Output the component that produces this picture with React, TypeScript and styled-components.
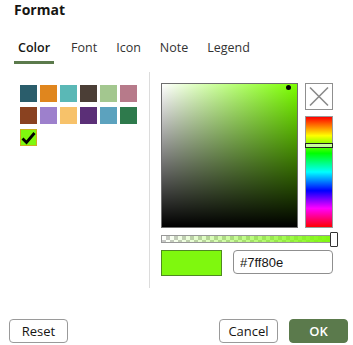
import React from 'react'
import styled, { createGlobalStyle } from 'styled-components'

const GlobalStyle = createGlobalStyle`
	body {
		margin: 0;
		background: #fff;
		font-family: 'Open Sans', 'Noto Sans', sans-serif;
		color: #161513;
	}
`

const SWATCHES = [
	'#2a5d6b', '#e0861e', '#5ab8b6', '#4b3e36', '#a3c78f', '#b77a8a',
	'#8a4220', '#9d80cc', '#f7c26a', '#5b2f77', '#5ca2be', '#2e7a4c',
]

const TABS = ['Color', 'Font', 'Icon', 'Note', 'Legend']

export default function App() {
	return (
		<Dialog>
			<GlobalStyle />
			<Title>Format</Title>
			<TabBar>
				{TABS.map((t, i) => (
					<Tab key={t} active={i === 0}>
						{t}
					</Tab>
				))}
			</TabBar>
			<Body>
				<SwatchPanel>
					<SwatchGrid>
						{SWATCHES.map((c) => (
							<Swatch key={c} color={c} />
						))}
						<Swatch color="#7ff80e" selected>
							<svg width="15" height="14" viewBox="0 0 15 14">
								<path d="M1.5 7.5 L5.5 11.5 L13.5 2" fill="none" stroke="#000" strokeWidth="2.8" />
							</svg>
						</Swatch>
					</SwatchGrid>
				</SwatchPanel>
				<Divider />
				<Picker>
					<PickerTop>
						<SatBox>
							<SatMarker />
						</SatBox>
						<SideCol>
							<ClearBtn>
								<svg width="26" height="25" viewBox="0 0 26 25">
									<path d="M4 3.5 L22 21.5 M22 3.5 L4 21.5" stroke="#8a8a8a" strokeWidth="1.6" />
								</svg>
							</ClearBtn>
							<HueBar>
								<HueMarker />
							</HueBar>
						</SideCol>
					</PickerTop>
					<AlphaBar>
						<AlphaHandle />
					</AlphaBar>
					<PickerBottom>
						<Preview />
						<HexInput defaultValue="#7ff80e" />
					</PickerBottom>
				</Picker>
			</Body>
			<Footer>
				<Button>Reset</Button>
				<Spacer />
				<Button>Cancel</Button>
				<Button primary>OK</Button>
			</Footer>
		</Dialog>
	)
}

const Dialog = styled.div`
	width: 353px;
	height: 345px;
	display: flex;
	flex-direction: column;
	box-sizing: border-box;
`

const Title = styled.div`
	font-weight: 700;
	font-size: 14px;
	line-height: 18px;
	padding: 1px 0 0 14px;
`

const TabBar = styled.div`
	display: flex;
	padding: 20px 0 0 14px;
`

const Tab = styled.div<{ active?: boolean }>`
	font-size: 12.5px;
	line-height: 18px;
	padding: 0 4px 4px;
	margin-right: 11px;
	color: ${(p) => (p.active ? '#161513' : '#333')};
	font-weight: ${(p) => (p.active ? 600 : 400)};
	border-bottom: 3px solid ${(p) => (p.active ? '#5b7a4c' : 'transparent')};
	&:first-child {
		margin-right: 13px;
	}
`

const Body = styled.div`
	display: flex;
	margin-top: 8px;
	height: 216px;
`

const SwatchPanel = styled.div`
	width: 129px;
	padding: 13px 0 0 20px;
`

const SwatchGrid = styled.div`
	display: grid;
	grid-template-columns: repeat(6, 17px);
	grid-auto-rows: 17px;
	gap: 5px 3px;
`

const Swatch = styled.div<{ color: string; selected?: boolean }>`
	background: ${(p) => p.color};
	box-sizing: border-box;
	border: ${(p) => (p.selected ? '1px solid #c9b21e' : 'none')};
	display: flex;
	align-items: center;
	justify-content: center;
`

const Divider = styled.div`
	width: 1px;
	background: #dcdcdc;
`

const Picker = styled.div`
	padding: 11px 0 0 11px;
	display: flex;
	flex-direction: column;
`

const PickerTop = styled.div`
	display: flex;
	gap: 7px;
`

const SatBox = styled.div`
	position: relative;
	width: 137px;
	height: 145px;
	box-sizing: border-box;
	border: 1px solid #6e6e6e;
	background: linear-gradient(to top, #000, rgba(0, 0, 0, 0)),
		linear-gradient(to right, #fff, #7bff00);
`

const SatMarker = styled.div`
	position: absolute;
	top: 1px;
	right: 6px;
	width: 5px;
	height: 5px;
	border-radius: 50%;
	background: #000;
`

const SideCol = styled.div`
	display: flex;
	flex-direction: column;
	gap: 6px;
`

const ClearBtn = styled.div`
	width: 28px;
	height: 27px;
	box-sizing: border-box;
	border: 1px solid #8f8f8f;
	display: flex;
	align-items: center;
	justify-content: center;
	background: #fff;
`

const HueBar = styled.div`
	position: relative;
	width: 28px;
	height: 112px;
	box-sizing: border-box;
	border: 1px solid #9a9a9a;
	background: linear-gradient(
		to bottom,
		#ff0000 0%,
		#ffff00 17%,
		#00ff00 33%,
		#00ffff 50%,
		#0000ff 67%,
		#ff00ff 83%,
		#ff0000 100%
	);
`

const HueMarker = styled.div`
	position: absolute;
	left: -1px;
	right: -1px;
	top: 26px;
	height: 3px;
	border: 1px solid #222;
	background: rgba(255, 255, 255, 0.6);
`

const AlphaBar = styled.div`
	position: relative;
	margin-top: 7px;
	width: 172px;
	height: 8px;
	box-sizing: border-box;
	border: 1px solid #999;
	background: linear-gradient(to right, rgba(127, 248, 14, 0), #7ff80e),
		repeating-conic-gradient(#c8c8c8 0 25%, #fff 0 50%) 0 0 / 8px 8px;
`

const AlphaHandle = styled.div`
	position: absolute;
	right: -6px;
	top: -4px;
	width: 6px;
	height: 13px;
	background: #fff;
	border: 1px solid #333;
	border-radius: 1px;
`

const PickerBottom = styled.div`
	display: flex;
	gap: 11px;
	margin-top: 7px;
`

const Preview = styled.div`
	width: 61px;
	height: 26px;
	box-sizing: border-box;
	background: #7ff80e;
	border: 1px solid #4f8a20;
`

const HexInput = styled.input`
	width: 100px;
	height: 24px;
	box-sizing: border-box;
	border: 1px solid #8f8f8f;
	border-radius: 4px;
	padding: 0 6px;
	font-family: 'Liberation Sans', Arial, sans-serif;
	font-size: 13px;
	color: #161513;
	outline: none;
`

const Footer = styled.div`
	display: flex;
	gap: 11px;
	padding: 31px 5px 0 9px;
`

const Spacer = styled.div`
	flex: 1;
`

const Button = styled.button<{ primary?: boolean }>`
	width: 59px;
	height: 24px;
	box-sizing: border-box;
	border-radius: 4px;
	font-family: 'Open Sans', 'Noto Sans', sans-serif;
	font-size: 13px;
	cursor: pointer;
	border: 1px solid ${(p) => (p.primary ? '#5b7a4c' : '#9a9a9a')};
	background: ${(p) => (p.primary ? '#5b7a4c' : '#fff')};
	color: ${(p) => (p.primary ? '#fff' : '#161513')};
	font-weight: ${(p) => (p.primary ? 600 : 400)};
`
